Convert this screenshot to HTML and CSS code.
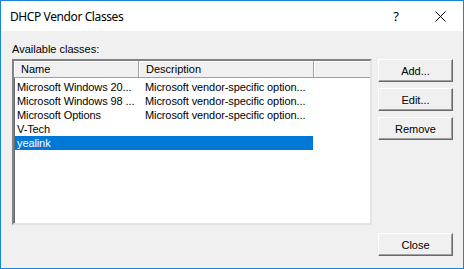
FILE: index.html
```html
<!DOCTYPE html>
<html lang="en">
<head>
    <meta charset="UTF-8">
    <title>DHCP Vendor Classes</title>
    <link rel="stylesheet" href="styles.css">
</head>
<body>
    <div class="window">
        <!-- Title bar -->
        <div class="title-bar">
            <span class="title">DHCP Vendor Classes</span>
            <span class="help">?</span>
            <span class="close-x">
                <svg width="11" height="11" viewBox="0 0 11 11">
                    <path d="M0.5 0.5 L10.5 10.5 M10.5 0.5 L0.5 10.5" stroke="#000" stroke-width="1"/>
                </svg>
            </span>
        </div>

        <div class="content">
            <div class="label">Available classes:</div>
            <div class="main-row">
                <div class="listbox">
                    <div class="list-header">
                        <div class="col-head name-head">Name</div>
                        <div class="col-head desc-head">Description</div>
                        <div class="col-head rest-head"></div>
                    </div>
                    <div class="rows">
                        <div class="row"><span class="name">Microsoft Windows 20...</span><span class="desc">Microsoft vendor-specific option...</span></div>
                        <div class="row"><span class="name">Microsoft Windows 98 ...</span><span class="desc">Microsoft vendor-specific option...</span></div>
                        <div class="row"><span class="name">Microsoft Options</span><span class="desc">Microsoft vendor-specific option...</span></div>
                        <div class="row"><span class="name">V-Tech</span><span class="desc"></span></div>
                        <div class="row selected"><span class="name">yealink</span><span class="desc"></span></div>
                    </div>
                </div>
                <div class="buttons">
                    <button class="btn">Add...</button>
                    <button class="btn">Edit...</button>
                    <button class="btn">Remove</button>
                </div>
            </div>
            <div class="footer">
                <button class="btn">Close</button>
            </div>
        </div>
    </div>
</body>
</html>
```

FILE: styles.css
```css
* {
    box-sizing: border-box;
}

body {
    margin: 0;
    font-family: 'Liberation Sans', Arial, sans-serif;
    font-size: 11px;
    color: #000;
    background-color: #f0f0f0;
}

.window {
    width: 464px;
    height: 269px;
    border: 1px solid #1883d7;
    background-color: #f0f0f0;
}

/* Title bar */
.title-bar {
    height: 30px;
    background-color: #fff;
    display: flex;
    align-items: center;
}

.title {
    font-family: 'Noto Sans', sans-serif;
    font-size: 12px;
    letter-spacing: -0.4px;
    margin-left: 9px;
    flex: 1;
}

.help {
    font-family: 'Noto Sans', sans-serif;
    font-size: 13px;
    margin-right: 36px;
}

.close-x {
    display: flex;
    margin-right: 17px;
}

/* Content */
.content {
    padding: 11px 10px 0 11px;
}

.label {
    height: 17px;
    line-height: 15px;
}

.main-row {
    display: flex;
}

.listbox {
    width: 360px;
    height: 166px;
    background-color: #fff;
    border-style: solid;
    border-width: 2px;
    border-color: #828282 #e3e3e3 #e3e3e3 #828282;
    box-shadow: inset 1px 1px 0 #696969;
}

.list-header {
    display: flex;
    height: 17px;
    background-color: #f0f0f0;
    border-bottom: 1px solid #a0a0a0;
}

.col-head {
    line-height: 16px;
    padding-left: 7px;
    border-right: 1px solid #a0a0a0;
    box-shadow: inset 1px 1px 0 #fff;
}

.name-head {
    width: 125px;
}

.desc-head {
    width: 175px;
}

.rest-head {
    flex: 1;
    border-right: none;
}

.rows {
    padding-top: 2px;
    padding-left: 1px;
}

.row {
    display: flex;
    width: 298px;
    height: 14px;
    line-height: 14px;
    padding-left: 2px;
    white-space: nowrap;
    letter-spacing: -0.1px;
}

.row .name {
    width: 128px;
}

.row.selected {
    background-color: #0078d7;
    color: #fff;
}

/* Buttons */
.buttons {
    display: flex;
    flex-direction: column;
    gap: 6px;
    margin-left: 6px;
}

.btn {
    width: 75px;
    height: 23px;
    padding: 0;
    font-family: 'Liberation Sans', Arial, sans-serif;
    font-size: 11px;
    color: #000;
    background-color: #f0f0f0;
    border-style: solid;
    border-width: 1px;
    border-color: #fff #696969 #696969 #fff;
    box-shadow: inset -1px -1px 0 #a0a0a0;
}

.footer {
    display: flex;
    justify-content: flex-end;
    margin-top: 8px;
}
```
